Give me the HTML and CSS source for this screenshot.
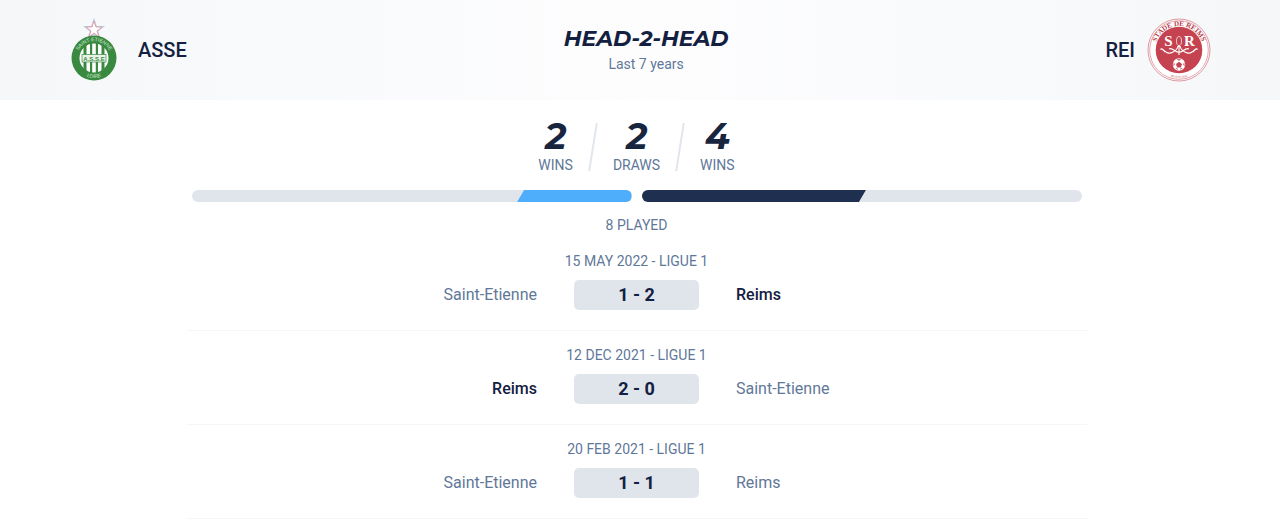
FILE: index.html
```html
<!DOCTYPE html>
<html lang="en">
<head>
  <meta charset="UTF-8" />
  <meta name="viewport" content="width=device-width, initial-scale=1.0"/>
  <title>Head-2-Head</title>
  <link rel="stylesheet" href="styles.css">
</head>
<body>
  <header class="h2h-header">
    <div class="team">
      <svg class="crest crest-home" viewBox="0 0 46 64" role="img" aria-label="Saint-Etienne">
        <defs>
          <clipPath id="stripes"><circle cx="23" cy="40" r="14.5"/></clipPath>
          <path id="homeTop" d="M6 40a17 17 0 0 1 34 0"/>
          <path id="homeBottom" d="M3 40a20 20 0 0 0 40 0"/>
        </defs>
        <path d="M23 3l2 6h6l-5 4 2 6-5-4-5 4 2-6-5-4h6z" fill="#fff" stroke="#b5d0e8" stroke-width="2.2"/>
        <path d="M23 3l2 6h6l-5 4 2 6-5-4-5 4 2-6-5-4h6z" fill="#fff" stroke="#e58d96" stroke-width=".8"/>
        <circle cx="23" cy="40" r="22.5" fill="#398a40"/>
        <g clip-path="url(#stripes)" fill="#fff">
          <path d="M8 24h4.500v32H8zM15.500 24h3.500v32h-3.500zM21.200 24h3.600v32h-3.600zM27 24h3.500v32H27zM33.500 24H38v32h-4.500z"/>
        </g>
        <rect x="11" y="36.500" width="24" height="7.500" fill="#e9f3e9" stroke="#398a40" stroke-width=".7"/>
        <text x="23" y="42.500" text-anchor="middle" class="home-name">A.S.S.E</text>
        <text class="home-ring"><textPath href="#homeTop" startOffset="50%" text-anchor="middle">SAINT-ETIENNE</textPath></text>
        <text class="home-ring"><textPath href="#homeBottom" startOffset="50%" text-anchor="middle">LOIRE</textPath></text>
      </svg>
      <span class="team-code">ASSE</span>
    </div>

    <div class="h2h-heading">
      <h1>HEAD-2-HEAD</h1>
      <p>Last 7 years</p>
    </div>

    <div class="team team-away">
      <span class="team-code">REI</span>
      <svg class="crest crest-away" viewBox="0 0 64 64" role="img" aria-label="Reims">
        <defs>
          <path id="awayTop" d="M9.350 40.240a24.100 24.100 0 1 1 45.300 0"/>
          <path id="awayBottom" d="M4 32a28 28 0 0 0 56 0"/>
        </defs>
        <circle cx="32" cy="32" r="31" fill="#fff" stroke="#d4808b" stroke-width=".8"/>
        <circle cx="32" cy="32" r="29.300" fill="none" stroke="#d4808b" stroke-width=".7"/>
        <circle cx="32" cy="32" r="23.300" fill="#c54251"/>
        <text class="away-ring"><textPath href="#awayTop" startOffset="50%" text-anchor="middle">STADE DE REIMS</textPath></text>
        <text class="away-small"><textPath href="#awayBottom" startOffset="50%" text-anchor="middle">DEPUIS 1931</textPath></text>
        <text x="21.500" y="28" text-anchor="middle" class="away-letter">S</text>
        <text x="42.500" y="28" text-anchor="middle" class="away-letter">R</text>
        <g fill="none" stroke="#fff">
          <ellipse cx="32" cy="23" rx="2.500" ry="4.500" stroke-width=".7"/>
          <path d="M32 37V27M31 28c-1 5-8 9-12 6-3-2-4-4-5-3 2 0 3 2 4 3M33 28c1 5 8 9 12 6 3-2 4-4 5-3-2 0-3 2-4 3M22 31c4-2 6 4 10 3 4 1 6-5 10-3" stroke-width="1.100"/>
        </g>
        <circle cx="32" cy="46.500" r="6.200" fill="#fff"/>
        <path d="M32 43.700l3 2.200-1.100 3.500h-3.800L29 45.900zM29.500 41.300h5l-2.500 1.400zM26.800 44l1 2.500-1.500 1.700zM37.200 44l-1 2.500 1.500 1.700zM28.300 50l2 .3.500 1.800zM35.700 50l-2 .3-.5 1.800z" fill="#c54251"/>
      </svg>
    </div>
  </header>

  <main class="h2h">
    <div class="totals">
      <div class="total"><strong>2</strong><span>WINS</span></div>
      <div class="divider"></div>
      <div class="total"><strong>2</strong><span>DRAWS</span></div>
      <div class="divider"></div>
      <div class="total"><strong>4</strong><span>WINS</span></div>
    </div>

    <div class="bars">
      <div class="bar bar-home"><div class="fill" style="width: 26%"></div></div>
      <div class="bar bar-away"><div class="fill" style="width: 51%"></div></div>
    </div>
    <p class="played">8 PLAYED</p>

    <ul class="matches">
      <li class="match">
        <p class="match-info">15 MAY 2022 - LIGUE 1</p>
        <div class="result">
          <span class="home">Saint-Etienne</span>
          <span class="score">1 - 2</span>
          <span class="away winner">Reims</span>
        </div>
      </li>
      <li class="match">
        <p class="match-info">12 DEC 2021 - LIGUE 1</p>
        <div class="result">
          <span class="home winner">Reims</span>
          <span class="score">2 - 0</span>
          <span class="away">Saint-Etienne</span>
        </div>
      </li>
      <li class="match">
        <p class="match-info">20 FEB 2021 - LIGUE 1</p>
        <div class="result">
          <span class="home">Saint-Etienne</span>
          <span class="score">1 - 1</span>
          <span class="away">Reims</span>
        </div>
      </li>
    </ul>
  </main>
</body>
</html>
```
FILE: styles.css
```css
* {
  box-sizing: border-box;
}

body {
  margin: 0;
  font-family: Roboto, sans-serif;
  font-size: 14px;
  line-height: 18px;
  color: #5f7899;
  background-color: #fff;
}

h1,
p,
ul {
  margin: 0;
  padding: 0;
}

.h2h-header {
  display: flex;
  justify-content: space-between;
  align-items: center;
  height: 100px;
  padding: 0 69px 0 71px;
  background: linear-gradient(to right, #f5f7f9, #fdfdfe 50%, #f5f7f9);
}

.team {
  display: flex;
  align-items: center;
  gap: 21px;
}

.team-away {
  gap: 12px;
}

.team-code {
  font-size: 20px;
  line-height: 24px;
  font-weight: 500;
  color: #13203f;
}

.crest {
  display: block;
}

.crest-home {
  width: 46px;
  height: 64px;
}

.crest-away {
  width: 64px;
  height: 64px;
}

.home-name {
  font: bold 6px "Liberation Sans", sans-serif;
  fill: #398a40;
}

.home-ring {
  font: 5px "Liberation Sans", sans-serif;
  fill: #d5ead6;
}

.away-ring {
  font: bold 7px "Liberation Serif", serif;
  fill: #b83847;
}

.away-small {
  font: 3px "Liberation Serif", serif;
  fill: #c54251;
}

.away-letter {
  font: bold 15px "Liberation Serif", serif;
  fill: #fff;
}

.h2h-heading {
  padding-bottom: 2px;
  text-align: center;
}

.h2h-heading h1 {
  font-family: Montserrat, Inter, sans-serif;
  font-size: 22px;
  line-height: 28px;
  font-weight: 700;
  font-style: italic;
  color: #13203f;
}

.h2h-heading p {
  margin-top: 2px;
}

.h2h {
  padding-right: 7px;
}

.totals {
  display: flex;
  justify-content: center;
  padding-top: 20px;
}

.total {
  display: flex;
  flex-direction: column;
  align-items: center;
}

.total strong {
  margin-bottom: 4px;
  font-family: Montserrat, Inter, sans-serif;
  font-size: 36px;
  line-height: 32px;
  font-weight: 700;
  font-style: italic;
  color: #17253f;
}

.divider {
  width: 2px;
  height: 48px;
  margin: 3px 19px 0;
  background-color: #e1e6ec;
  transform: skewX(-9deg);
}

.bars {
  display: flex;
  gap: 10px;
  max-width: 900px;
  margin: 16px auto 0;
  padding: 0 5px;
}

.bar {
  display: flex;
  flex: 1;
  height: 12px;
  border-radius: 6px;
  overflow: hidden;
  background-color: #e0e5ec;
}

.bar-home {
  justify-content: flex-end;
}

.bar-home .fill {
  background-color: #4eaefb;
  clip-path: polygon(7px 0, 100% 0, 100% 100%, 0 100%);
}

.bar-away .fill {
  background-color: #1f2f4f;
  clip-path: polygon(0 0, 100% 0, calc(100% - 7px) 100%, 0 100%);
}

.played {
  margin-top: 14px;
  text-align: center;
}

.matches {
  max-width: 900px;
  margin: 3px auto 0;
  list-style: none;
}

.match {
  padding: 15px 0 20px;
  border-bottom: 1px solid #f4f6f8;
}

.match-info {
  text-align: center;
}

.result {
  display: grid;
  grid-template-columns: 1fr 125px 1fr;
  align-items: center;
  gap: 37px;
  margin-top: 10px;
  font-size: 16px;
}

.home {
  text-align: right;
}

.winner {
  font-weight: 500;
  color: #13203f;
}

.score {
  border-radius: 5px;
  background-color: #e0e5ec;
  color: #13203f;
  font-size: 18px;
  font-weight: 700;
  line-height: 30px;
  text-align: center;
}
```
